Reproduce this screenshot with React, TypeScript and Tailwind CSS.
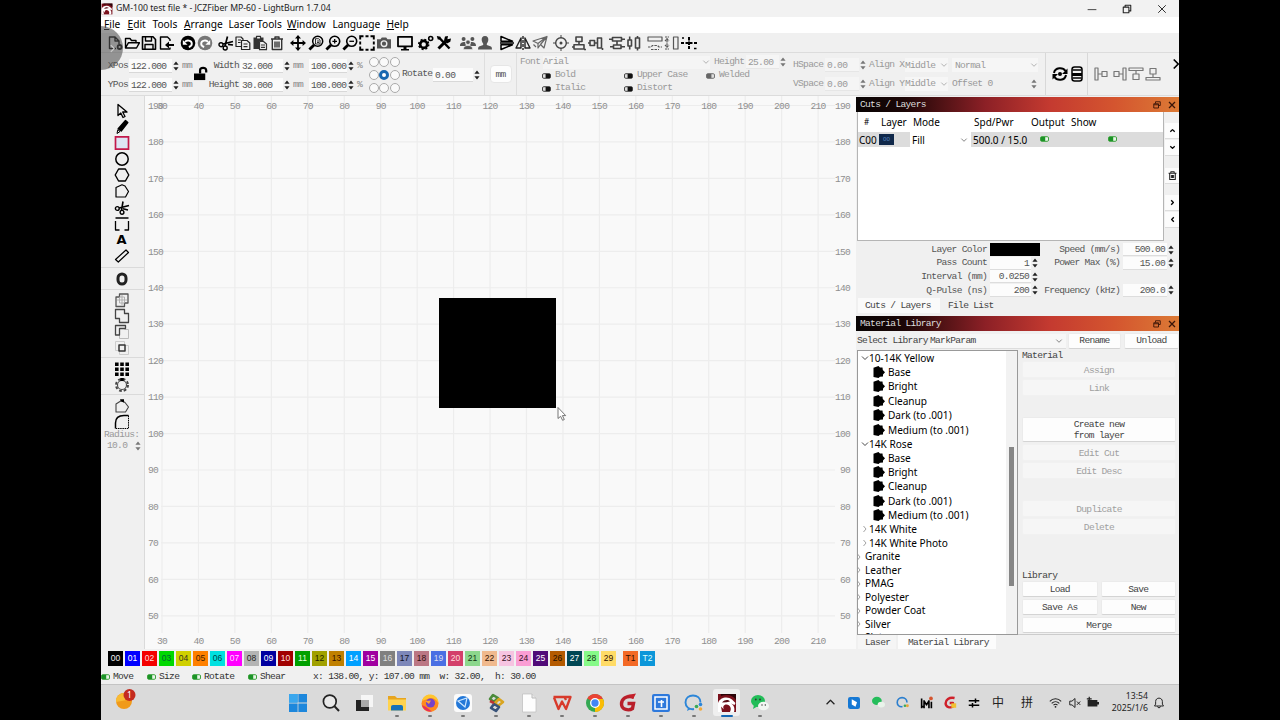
import React from "react";

type Kids = { children?: React.ReactNode };

const mono = "font-['Liberation_Mono',monospace] text-[9.6px] tracking-[-0.7px] whitespace-pre";
const ui = "font-['Noto_Sans','Noto_Sans_CJK_SC',sans-serif] whitespace-nowrap";

/* ---------- icon base ---------- */
function Ico({ children, c = "w-4 h-4 text-black", sw = 1.4 }: Kids & { c?: string; sw?: number }) {
  return (
    <svg viewBox="0 0 16 16" className={`shrink-0 ${c}`} fill="none" stroke="currentColor" strokeWidth={sw} strokeLinejoin="round">
      {children}
    </svg>
  );
}
const F = { fill: "currentColor", stroke: "none" } as const;

function Spin({ c = "text-[#222]" }: { c?: string }) {
  return (
    <svg viewBox="0 0 8 12" className={`w-2 h-3 shrink-0 ${c}`} fill="currentColor">
      <path d="M4 1.4 6.6 4.8H1.4ZM4 10.6 6.6 7.2H1.4Z" />
    </svg>
  );
}
function Down({ c = "text-[#777]" }: { c?: string }) {
  return (
    <svg viewBox="0 0 8 8" className={`w-2 h-2 shrink-0 ${c}`} fill="none" stroke="currentColor" strokeWidth="0.9">
      <path d="M1.3 2.6 4 5.3 6.7 2.6" />
    </svg>
  );
}
function Toggle({ on, dim }: { on?: boolean; dim?: boolean }) {
  return (
    <svg viewBox="0 0 9 6" className="w-[9px] h-[6px] shrink-0">
      <rect x="0.5" y="0.7" width="8" height="4.6" rx="1.2" fill={on ? "#e8f5e8" : "#ddd"} stroke={on ? "#2a9a2a" : dim ? "#666" : "#333"} strokeWidth="0.9" />
      <rect x={on || dim ? 1 : 3.6} y="0.9" width={on ? 4.2 : 4.4} height="4.2" fill={on ? "#1c9427" : dim ? "#666" : "#111"} />
    </svg>
  );
}

/* ---------- top toolbar ---------- */
const lens = (
  <>
    <circle cx="9.7" cy="6.3" r="5" />
    <path d="M6 10 1.4 14.6" strokeWidth="2.8" />
  </>
);
const groups: React.ReactNode[][] = [
  [
    <Ico><path d="M9 13.5H2.5V2H8l4 4v3M8 2v4h4" /><circle cx="12.6" cy="12" r="2" strokeWidth="1.8" /></Ico>,
    <Ico><path d="M1.5 13V3.5H6l1.5 2H12V8M1.5 13 4.5 7.7H15.5L12.5 13Z" /></Ico>,
    <Ico><path d="M1.5 1.8H12L14.5 4.5V14.2H1.5Z" strokeWidth="1.6" /><path d="M4.5 2V6H10.5V2M4 14V9.5H12V14" /></Ico>,
    <Ico><path d="M12 6V4.5L9.500 2H2.500V14H12V12.500" /><path d="M16 10H9" strokeWidth="2" /><path d="M11 6.500 7 10 11 13.500Z" {...F} /></Ico>,
  ],
  [
    <Ico><circle cx="8" cy="8" r="7.3" {...F} /><path d="M5 7C6.500 4.600 11.800 5 11.800 8.800c0 1.700-1.300 2.700-3 3.200" stroke="#fff" strokeWidth="1.900" /><path d="M2.800 5V9.800H7.600Z" fill="#fff" stroke="none" /></Ico>,
    <Ico c="w-4 h-4 text-[#777]"><circle cx="8" cy="8" r="7.3" {...F} /><path d="M11 7C9.500 4.600 4.200 5 4.200 8.800c0 1.700 1.300 2.700 3 3.200" stroke="#fff" strokeWidth="1.900" /><path d="M13.200 5V9.800H8.400Z" fill="#fff" stroke="none" /></Ico>,
  ],
  [
    <Ico><circle cx="3" cy="9.7" r="2" /><circle cx="7.2" cy="13" r="2" /><path d="M5 9 15 6.5M7 11 9.5 1.5M10 9.3l5 .7" strokeWidth="1.7" /></Ico>,
    <Ico c="w-4 h-4 text-[#222]" sw={1.2}><path d="M6 11.5H1V2H6L8 4V5M3 5H6M3 7.5H5.5M6.5 5.5H12L14.8 8V14.5H6.5ZM8.5 9H12.5M8.5 11.7H12.5" /></Ico>,
    <Ico c="w-4 h-4 text-[#333]" sw={1.2}><path d="M1.5 2.5H11.5V6H7V14H1.5Z" {...F} /><path d="M4.5 1.3H8.5V4H4.5Z" fill="#eee" /><path d="M7.5 6.5H11.5L14.5 9V14.7H7.5Z" fill="#eee" /><path d="M9 10H13M9 12.3H13" /></Ico>,
    <Ico c="w-4 h-4 text-[#333]"><path d="M2 4H14M6 3.5V2H10V3.5M3.3 4.5V14.5H12.7V4.5M6 6.5V12.5M8 6.5V12.5M10 6.5V12.5" /></Ico>,
  ],
  [
    <Ico sw={1.8}><path d="M8 2V14M2 8H14" /><path d="M8 0 11 3.4H5ZM8 16 5 12.6H11ZM0 8 3.4 5V11ZM16 8 12.6 11V5Z" {...F} /></Ico>,
    <Ico sw={1.5}>{lens}<path d="M7.500 3.700H10.500L12 5V9H7.500ZM9 6H11M9 7.500H11" strokeWidth=".8" /></Ico>,
    <Ico sw={1.6}>{lens}<path d="M9.7 4V8.6M7.4 6.3H12" strokeWidth="1.3" /></Ico>,
    <Ico sw={1.6}>{lens}<path d="M7.4 6.3H12" strokeWidth="1.3" /></Ico>,
    <Ico sw={1.9}><path d="M1.2 4.5V1.2H4.5M6.5 1.2H9.5M11.5 1.2H14.8V4.5M14.8 6.5V9.5M14.8 11.5V14.8H11.5M9.5 14.8H6.5M4.5 14.8H1.2V11.5M1.2 9.5V6.5" strokeLinejoin="miter" /></Ico>,
    <Ico c="w-4 h-4 text-[#555]"><path d="M1 4.3H4.5L5.8 2.6H10.2L11.5 4.3H15V13.6H1Z" {...F} /><circle cx="8" cy="8.7" r="2.8" stroke="#eee" /></Ico>,
  ],
  [<Ico sw={1.8}><path d="M1 1.8H15V11.3H1Z" /><path d="M6.5 11.5H9.5V14H12V15.5H4V14H6.5Z" {...F} /></Ico>],
  [
    <Ico><circle cx="5.7" cy="9.4" r="3.5" strokeWidth="2.6" /><circle cx="5.7" cy="9.4" r="5" strokeWidth="1.5" strokeDasharray="2 1.93" /><circle cx="12.7" cy="3.5" r="2" strokeWidth="1.6" /></Ico>,
    <Ico><path d="M3 2.5 13.5 13.5" strokeWidth="2.4" /><path d="M2.5 13.5 9.5 6.5" strokeWidth="3" /><path d="M9 1.5 12 1 11.4 4.2 15 3.6 14.3 6.8 11 8.4 8 5.5Z" {...F} /><path d="M.8 1 4.5 1.8 4.2 4.6 1.8 4.4Z" {...F} /></Ico>,
  ],
  [
    <Ico c="w-4 h-4 text-[#555]"><g {...F}><circle cx="3.6" cy="4" r="2" /><circle cx="12.4" cy="4" r="2" /><path d="M0 11C0 8 1.5 7 5 7L6 11ZM16 11C16 8 14.5 7 11 7L10 11Z" /><circle cx="8" cy="7.2" r="2.3" stroke="#eee" strokeWidth=".8" /><path d="M3.5 14.5C3.5 11.5 5 10.5 8 10.5S12.500 11.5 12.500 14.500Z" stroke="#eee" strokeWidth=".6" /></g></Ico>,
    <Ico c="w-4 h-4 text-[#555]"><path d="M8 1C10.500 1 11.500 2.800 11.300 5 11.100 7 10.300 8 9.800 8.700V10L14 11.600Q15 12.200 15 14.500H1Q1 12.200 2 11.600L6.200 10V8.700C5.700 8 4.900 7 4.700 5 4.500 2.800 5.500 1 8 1Z" {...F} /></Ico>,
  ],
  [
    <Ico sw={1.5}><path d="M2 8H16M3 1.500 14.500 6.300H3ZM3 14.500 14.500 9.700H3Z" /></Ico>,
    <Ico c="w-4 h-4 text-[#222]"><path d="M8 1V15" strokeDasharray="3 1" /><path d="M6 3V13H1ZM10 3V13H15Z" /></Ico>,
    <Ico c="w-4 h-4 text-[#666]" sw={1.2}><path d="M1 6 15 1.500 12 13 8.500 9.500 6 13V8.500ZM6 8.500 15 1.500 8.500 9.500M1.500 9.500 4 12" /></Ico>,
  ],
  [
    <Ico c="w-4 h-4 text-[#444]"><circle cx="8" cy="8" r="5.300" /><circle cx="8" cy="8" r="1.500" {...F} /><path d="M8 0V3M8 13V16M0 8H3M13 8H16" strokeWidth="1" /></Ico>,
    <Ico c="w-4 h-4 text-[#444]" sw={1.600}><path d="M5 2H11V6.500H5ZM3 9.800H13V14H3ZM8 6.500V9.800M1 12H3M13 14.500H15" /></Ico>,
    <Ico c="w-4 h-4 text-[#444]" sw={1.600}><path d="M2 5.500H6.500V10.500H2ZM9.500 3H13.500V13H9.500ZM6.500 8H9.500M0 8H2M14.500 13V15" /></Ico>,
  ],
  [
    <Ico c="w-4 h-4 text-[#444]" sw={1.600}><path d="M3.500 2.500H12.500V6H3.500ZM4.500 10H12V13.500H4.500ZM0 4.200H3.500M12.500 4.200H16M1 11.700H4.500M12 11.700H16M8 6V10" /></Ico>,
    <Ico c="w-4 h-4 text-[#444]" sw={1.600}><path d="M2 5H5.500V11H2ZM9.500 3H13.500V13H9.500ZM3.700 1.500V5M3.700 11V14.500M11.500 1V3M11.500 13V15.500" /></Ico>,
  ],
  [
    <Ico c="w-4 h-4 text-[#555]" sw={1.200}><path d="M1 2H15V6H1Z" /><path d="M1 12H4L5.500 10.500H10.500L12 12H15M4 14.500H12" strokeDasharray="2.500 1" /></Ico>,
    <Ico c="w-4 h-4 text-[#555]" sw={1.200}><path d="M1 2H5M1 14H5M3 3V13M1 6 3 4 5 6M1 10 3 12 5 10" strokeDasharray="2 .6" /><path d="M9.500 2H14V14H9.500Z" /></Ico>,
    <Ico sw={2}><path d="M8 2V14M0 8H3M4.500 8H11.500M13 8H16" strokeDasharray="3.500 1" /><path d="M13 13.500H15.500M1 3H3" strokeWidth="1.500" /></Ico>,
  ],
];

/* ---------- left tools ---------- */
const tools = [
  <Ico sw={1.3}><path d="M4 1.500 13 9H8.700L11 13.500 9 14.500 6.800 10 4 12.500Z" /></Ico>,
  <Ico><path d="M11.500 1.500 13.800 3.500 7.200 12 4.200 9.700Z" {...F} stroke="currentColor" /><path d="M3.800 10.700 6 12.500 3 14.500Z" strokeWidth="1" /></Ico>,
  <Ico c="w-4 h-4 text-[#c2184b]" sw={1.700}><path d="M1.500 1.800H14.500V14.200H1.500Z" fill="#dde4f4" strokeLinejoin="miter" /></Ico>,
  <Ico sw={1.500}><circle cx="8" cy="8" r="6.200" /></Ico>,
  <Ico><path d="M4.600 2H11.400L14.800 8 11.400 14H4.600L1.200 8Z" /></Ico>,
  <Ico sw={1.200}><path d="M2 4.500 8 1.800 11 3 14.500 8.500 11.500 14H2Z" /></Ico>,
  <Ico><circle cx="3.300" cy="8.500" r="1.900" /><circle cx="8" cy="12.300" r="1.900" /><path d="M5.200 8.100 15 5.500M7.500 10.500 9 1.500M9 8.800 14 10" strokeWidth="1.600" /></Ico>,
  <Ico sw={1.300}><path d="M1.500 2H14.500M1.500 5V14H5.500M14.500 5V14H10.500" /></Ico>,
  <span className="font-['DejaVu_Sans'] font-bold text-[13px] leading-4">A</span>,
  <Ico sw={1.200}><path d="M12 2 14.500 4.500 4.300 14 1.500 11.500Z" /></Ico>,
];
const boolTools = [
  <Ico c="w-4 h-4 text-[#555]" sw={1.300}><path d="M5.500 4V2H14V11H10.500V14.500H2V5H5.500Z" /><path d="M5.500 5V11H10.500M10.500 11V5H5.500M8 3V13M3 8H13" stroke="#aaa" strokeWidth=".9" /></Ico>,
  <Ico c="w-4 h-4 text-[#444]" sw={1.300}><path d="M1.500 1.500H10.500V5.500H14.500V14.500H5.500V10.500H1.500Z" /></Ico>,
  <Ico c="w-4 h-4 text-[#444]" sw={1.300}><path d="M10.500 5.500H14.500V14.500H5.500V10.500" stroke="#bbb" strokeWidth="1" /><path d="M1.500 1.500H11.500V4.500H5.500V11H1.500Z" /></Ico>,
  <Ico c="w-4 h-4 text-[#333]" sw={1.500}><path d="M1.500 1.500H10.500V5M5 10.500H1.500V1.500M11 5.500H14.500V14.500H5.500V11" stroke="#ccc" strokeWidth="1" /><path d="M5 5H11V11H5Z" /></Ico>,
];
const arrayTools = [
  <Ico><path d="M1 1.500h3.600v3.600H1ZM6.200 1.500h3.600v3.600H6.200ZM11.400 1.500H15v3.600h-3.600ZM1 6.500h3.600v3.600H1ZM6.200 6.500h3.600v3.600H6.200ZM11.400 6.500H15v3.600h-3.600ZM1 11.500h3.600v3.600H1ZM6.200 11.500h3.600v3.600H6.200ZM11.400 11.500H15v3.600h-3.600Z" {...F} /></Ico>,
  <Ico c="w-4 h-4 text-[#444]" sw={1.100}><circle cx="8" cy="8" r="4.500" /><circle cx="8" cy="8" r="6" strokeWidth="2" strokeDasharray="2.700 2.010" /><path d="M6.300 1H9.700V4H6.300Z" {...F} fill="#000" /></Ico>,
];
const nodeTools = [
  <Ico c="w-4 h-4 text-[#444]" sw={1.100}><path d="M2 6 7.500 2.500 11 4.500 14.500 9 11.500 14H2Z" /><path d="M6 1.300H10V4.500L7 3.500Z" {...F} fill="#000" /></Ico>,
  <Ico sw={1.500}><path d="M1.500 14.500V9C1.500 4 5 1.500 10 1.500H14.500" /><path d="M14.500 1.500V14.500H1.500" strokeWidth="1" strokeDasharray="1.500 .7" /></Ico>,
];

/* ---------- property bar ---------- */
function Field({ v, w, unit, dim }: { v: string; w: string; unit?: string; dim?: boolean }) {
  return (
    <span className={`flex items-center ${dim ? "text-[#999]" : "text-[#555]"}`}>
      <span className={`h-[14px] leading-[15px] border-b pl-[2px] ${dim ? "bg-[#f5f5f5] border-[#e6e6e6]" : "bg-[#fbfbfb] border-[#d8d8d8]"} ${w}`}>{v}</span>
      <Spin c={dim ? "text-[#777]" : "text-[#222]"} />
      {unit && <span className="pl-[2px] w-[14px] text-[#888]">{unit}</span>}
    </span>
  );
}

function PropBar() {
  const dots = [0, 1, 2, 3, 4, 5, 6, 7, 8];
  return (
    <div className={`h-[43px] flex bg-[#f0f0f0] border-b border-[#dcdcdc] text-[#555] ${mono}`}>
      <div className="w-[93px] pt-1 flex flex-col">
        {["XPos", "YPos"].map((l) => (
          <div key={l} className="h-[18.500px] flex items-center">
            <span className="w-[28px] text-right pr-px">{l}</span>
            <Field v="122.000" w="w-[43px]" unit="mm" />
          </div>
        ))}
      </div>
      <div className="w-[14px] pt-[13px]">
        <Ico c="w-[15px] h-[15px] text-black"><path d="M0 8H12V15H0Z" {...F} /><path d="M6.500 8V4.500C6.500 1 13 1 13 4.500V7" strokeWidth="2.400" /></Ico>
      </div>
      <div className="w-[161px] pt-1 flex flex-col">
        {[["Width", "32.000"], ["Height", "30.000"]].map(([l, v]) => (
          <div key={l} className="h-[18.500px] flex items-center">
            <span className="w-[32px] text-right pr-px">{l}</span>
            <Field v={v} w="w-[43px]" unit="mm" />
            <span className="w-[4px]" />
            <Field v="100.000" w="w-[38px]" unit="%" />
          </div>
        ))}
      </div>
      <div className="w-[31px] grid grid-cols-3 gap-y-[3px] content-start justify-items-center pt-1">
        {dots.map((d) => (
          <span key={d} className={d === 4 ? "w-[10px] h-[10px] rounded-full bg-white border-[3px] border-[#1767b0]" : "w-[10px] h-[10px] rounded-full bg-[#fafafa] border border-[#aaa]"} />
        ))}
      </div>
      <div className="w-[84px] flex items-center pt-px">
        <span className="w-[33px] pl-[2px]">Rotate</span>
        <Field v="0.00" w="w-[40px]" />
      </div>
      <div className="w-[33px] border-x border-[#dedede] flex items-center justify-center">
        <span className="w-[22px] h-[18px] bg-[#fdfdfd] border border-[#e6e6e6] rounded-sm leading-[17px] text-center text-[#555]">mm</span>
      </div>
      <div className="w-[275px] pt-[2px] flex flex-col text-[#999]">
        <div className="h-[14px] flex items-center">
          <span className="w-[26px] pl-[3px]">Font</span>
          <span className="w-[167px] h-[13px] leading-[14px] bg-[#f5f5f5] flex items-center justify-between"><span>Arial</span><Down c="text-[#aaa]" /></span>
          <span className="w-[36px] pl-[4px]">Height</span>
          <Field v="25.00" w="w-[33px]" dim />
        </div>
        <div className="grid grid-cols-[82px_82px_80px] pl-[25px]">
          {[["Bold", 0], ["Upper Case", 0], ["Welded", 1], ["Italic", 0], ["Distort", 0]].map(([l, d]) => (
            <span key={l} className="h-[13px] flex items-center gap-1"><Toggle dim={d === 1} />{l}</span>
          ))}
        </div>
      </div>
      <div className="w-[252px] pt-[3px] pl-px flex flex-col text-[#999]">
        {[["HSpace", "Align X", "Normal"], ["VSpace", "Align Y", "Offset 0"]].map(([a, b, c], i) => (
          <div key={a} className="h-[18.500px] flex items-center">
            <span className="w-[32px]">{a}</span>
            <Field v="0.00" w="w-[34px]" dim />
            <span className="w-[38px] pl-[2px]">{b}</span>
            <span className="w-[43px] h-[14px] leading-[15px] bg-[#f6f6f6] flex items-center justify-between">Middle<Down c="text-[#aaa]" /></span>
            <span className={i ? "w-[89px] h-[14px] leading-[15px] pl-[3px] ml-px flex items-center justify-between" : "w-[86px] h-[14px] leading-[15px] pl-[3px] ml-1 bg-[#f6f6f6] flex items-center justify-between"}>{c}{i ? <Spin c="text-[#777]" /> : <Down c="text-[#aaa]" />}</span>
          </div>
        ))}
      </div>
      <div className="w-[43px] border-x border-[#d8d8d8] flex items-center gap-[1px] pl-[6px] ml-px">
        <Ico sw={2}><path d="M2 7C3 1 11 1 13.500 5M14 9C13 15 5 15 2.500 11" /><path d="M15.500 2.500V8H10ZM.5 13.500V8H6Z" {...F} /><circle cx="8" cy="8" r="2" {...F} /></Ico>
        <Ico sw={1.500}><rect x="3" y="1" width="10" height="14" rx="2.500" /><path d="M3.500 4H12.500M3.500 12H12.500" /><path d="M3 7H13V10H3Z" {...F} /></Ico>
      </div>
      <div className="flex items-center gap-[1px] pl-[6px] text-[#777]">
        {["M1 2H4V14H1ZM4 8H8M8 5.500H13V10.500H8Z", "M12 2H15V14H12ZM12 8H8M3 5.500H8V10.500H3Z", "M1 2H15V4.500H1ZM8 4.500V8M5 8H11V13.500H5Z", "M1 11.500H15V14H1ZM8 11.500V8M5 2.500H11V8H5Z"].map((d) => (
          <Ico key={d} c="w-4 h-4" sw={1.200}><path d={d} /></Ico>
        ))}
      </div>
      <div className="ml-auto w-[6px] pt-[5px] overflow-hidden">
        <Ico c="w-[12px] h-[12px] text-black -ml-[3px]" sw={2.300}><path d="M5 2 11 8 5 14" /></Ico>
      </div>
    </div>
  );
}

/* ---------- workspace ---------- */
function Workspace() {
  const xs = Array.from({ length: 19 }, (_, i) => ({ v: 30 + i * 10, p: 17 + i * 36.45 }));
  const ys = Array.from({ length: 15 }, (_, i) => ({ v: 190 - i * 10, p: 9.500 + i * 36.45 }));
  return (
    <svg width="711" height="553" viewBox="0 0 711 553" className="bg-[#f9f9f9] shrink-0">
      <g stroke="#ededed" strokeWidth="1.200">
        {xs.map((x) => <line key={x.v} x1={x.p} x2={x.p} y1="0" y2="537" />)}
        {ys.map((y) => <line key={y.v} x1="16" x2="690" y1={y.p} y2={y.p} />)}
      </g>
      <g className={mono} fill="#8f8f8f" textAnchor="middle">
        {xs.map((x) => (
          <React.Fragment key={x.v}>
            <text x={x.p} y="12.500">{x.v}</text>
            <text x={x.p} y="547.500">{x.v}</text>
          </React.Fragment>
        ))}
        {ys.map((y) => (
          <React.Fragment key={y.v}>
            <text x={y.v < 100 ? 8 : 10.500} y={y.p + 3.200}>{y.v}</text>
            <text x={y.v < 100 ? 700 : 697.500} y={y.p + 3.200}>{y.v}</text>
          </React.Fragment>
        ))}
      </g>
      <rect x="294" y="202" width="117" height="110" fill="#000" />
      <path d="M413 311.500V322.500L415.600 320.300 417.600 324.300 419.300 323.500 417.400 319.600H420.700Z" fill="#fff" stroke="#666" strokeWidth=".9" />
    </svg>
  );
}

/* ---------- right docks ---------- */
function DockHead({ children }: Kids) {
  return (
    <div className={`h-[15px] shrink-0 flex items-center pl-[4px] pr-[3px] text-[#ddd] bg-[linear-gradient(90deg,#080404_0%,#1c0606_15%,#8c2026_40%,#c43a30_60%,#d4552f_80%,#dc7a35_100%)] ${mono}`}>
      <span className="pt-[2px]">{children}</span>
      <span className="ml-auto flex gap-[7px] text-[#3a1508]">
        <Ico c="w-2 h-2" sw={1.800}><path d="M5 5V1.500H14.500V9H11M1.500 5.500H11V14H1.500ZM2 7.500H11" /></Ico>
        <Ico c="w-2 h-2" sw={2.600}><path d="M2 2 14 14M14 2 2 14" /></Ico>
      </span>
    </div>
  );
}
const sideBtn = "w-[14px] h-[16px] bg-[#fcfcfc] border-b border-[#ddd] flex items-center justify-center";

function Cuts() {
  const chev = (d: string) => <span className={sideBtn}><Ico c="w-[7px] h-[7px] text-black" sw={3}><path d={d} /></Ico></span>;
  const rows: [string, string, string, string][] = [
    ["Layer Color", "", "Speed (mm/s)", "500.00"],
    ["Pass Count", "1", "Power Max (%)", "15.00"],
    ["Interval (mm)", "0.0250", "", ""],
    ["Q-Pulse (ns)", "200", "Frequency (kHz)", "200.0"],
  ];
  const val = "h-[13px] leading-[14px] bg-[#fcfcfc] border-b border-[#ddd] text-right pr-[2px]";
  return (
    <>
      <div className="h-[129px] flex">
        <div className={`w-[307px] ml-px bg-white border border-t-0 border-[#b5b5b5] text-[10px] text-black ${ui}`}>
          <div className="h-[20px] grid grid-cols-[21px_32px_61px_57px_40px_50px] items-center pl-[2px] leading-none">
            <span className="pl-1 text-[8px]">#</span><span>Layer</span><span>Mode</span><span>Spd/Pwr</span><span>Output</span><span>Show</span>
          </div>
          <div className="h-[15px] bg-[#dcdcdc] grid grid-cols-[20px_31px_61px_69px_68px_20px] items-center pl-[1px] leading-none">
            <span>C00</span>
            <span className="w-[15px] h-[11px] bg-[#10284a] text-[#5f8fc5] text-[6px] leading-[11px] text-center">00</span>
            <span className="h-[15px] bg-white flex items-center justify-between pl-[2px] pr-[3px]">Fill<Down /></span>
            <span className="pl-[2px]">500.0 / 15.0</span>
            <span className="flex pb-px"><Toggle on /></span><span className="flex pb-px"><Toggle on /></span>
          </div>
        </div>
        <div className="pl-px pt-[11px] flex flex-col">
          {chev("M3 11 8 6 13 11")}
          <span className="h-px" />
          {chev("M3 5 8 10 13 5")}
          <span className="h-[12px]" />
          <span className={sideBtn}><Ico c="w-[9px] h-[9px] text-[#222]" sw={1.800}><path d="M1 4H15M5 3V1.500H11V3M3 4V15H13V4M6 7V12.500M8 7V12.500M10 7V12.500" /></Ico></span>
          <span className="h-[11px]" />
          {chev("M5 3 10 8 5 13")}
          <span className="h-px" />
          {chev("M11 3 6 8 11 13")}
        </div>
      </div>
      <div className={`pt-[2px] text-[#555] ${mono}`}>
        {rows.map(([a, b, c, d], i) => (
          <div key={a} className="h-[13.600px] flex items-center">
            <span className="w-[131px] text-right pt-px">{a}</span>
            <span className="w-[53px] pl-[3px] flex items-center">
              {i === 0 ? <span className="w-[51px] h-[13px] bg-black" /> : <><span className={`w-[41px] ${val}`}>{b}</span><Spin /></>}
            </span>
            <span className="w-[80px] text-right pt-px">{c}</span>
            {d && <span className="pl-[3px] flex items-center"><span className={`w-[44px] ${val}`}>{d}</span><Spin /></span>}
          </div>
        ))}
      </div>
      <div className={`h-[17px] mt-[1px] flex items-start text-[#444] leading-[16px] ${mono}`}>
        <span className="w-[82px] h-[15px] ml-[2px] pl-[7px] bg-[#fafafa]">Cuts / Layers</span>
        <span className="pl-[8px]">File List</span>
      </div>
    </>
  );
}

const tree: [number, string][] = [
  [1, "10-14K Yellow"], [2, "Base"], [2, "Bright"], [2, "Cleanup"], [2, "Dark (to .001)"], [2, "Medium (to .001)"],
  [1, "14K Rose"], [2, "Base"], [2, "Bright"], [2, "Cleanup"], [2, "Dark (to .001)"], [2, "Medium (to .001)"],
  [3, "14K White"], [3, "14K White Photo"],
  [4, "Granite"], [4, "Leather"], [4, "PMAG"], [4, "Polyester"], [4, "Powder Coat"], [4, "Silver"], [4, "Slate"],
];
function Btn({ children, c = "h-[16px] w-full", dim }: Kids & { c?: string; dim?: boolean }) {
  return (
    <span className={`flex items-center justify-center text-center rounded-[2px] border pt-px ${dim ? "bg-[#f6f6f6] border-[#f1f1f1] text-[#a0a0a0]" : "bg-[#fdfdfd] border-[#ebebeb] border-b-[#d4d4d4] text-[#444]"} ${c}`}>{children}</span>
  );
}

function Library() {
  return (
    <>
      <div className={`h-[19px] flex items-center pt-px text-[#444] ${mono}`}>
        <span className="w-[74px] pl-px pt-px">Select Library</span>
        <span className="w-[136px] h-[15px] leading-[16px] bg-[#f7f7f7] border-b border-[#ddd] flex items-center justify-between pr-[3px]">MarkParam<Down /></span>
        <Btn c="w-[53px] h-[16px] ml-[2px]">Rename</Btn>
        <Btn c="w-[55px] h-[16px] ml-[3px]">Unload</Btn>
      </div>
      <div className="h-[285px] flex">
        <div className={`w-[161px] ml-px border border-[#999] bg-white flex overflow-hidden text-black text-[10.100px] ${ui}`}>
          <div className="flex-1 overflow-hidden">
            {tree.map(([k, t], i) => (
              <div key={i} className={k === 2 ? "h-[14.450px] pl-[15px] flex items-center gap-[3px] leading-none" : k === 4 ? "h-[13.500px] -ml-[3px] flex items-center leading-none" : "h-[13.600px] pl-[3px] flex items-center leading-none"}>
                {k === 2 && <svg viewBox="0 0 12 12" className="w-3 h-3 shrink-0"><path d="M.5 1.800 5.500 0 7 1.500 9.500 1.500 9.800 4 12 6.200 10 8.500 10 10.500 7 10.800 5.500 12 .5 11Z" /></svg>}
                {k === 1 && <Ico c="w-2 h-2 text-[#333]" sw={1.800}><path d="M2 5 8 11 14 5" /></Ico>}
                {k >= 3 && <Ico c={k === 4 ? "w-[8px] h-[8px] text-[#999] mr-[2px]" : "w-[8px] h-[8px] text-[#999]"} sw={1.800}><path d="M5 2 10 8 5 14" /></Ico>}
                {t}
              </div>
            ))}
          </div>
          <div className="w-[11px] bg-[#f2f2f2] flex justify-center pt-[96px]"><span className="w-[5px] h-[139px] bg-[#868686]" /></div>
        </div>
        <div className={`flex-1 pl-[4px] pr-[3px] flex flex-col text-[#444] border-b border-[#ccc] leading-[11px] ${mono}`}>
          <span className="h-[11px]">Material</span>
          <Btn dim c="h-[17px] w-full">Assign</Btn>
          <Btn dim c="h-[17px] w-full mt-px">Link</Btn>
          <Btn c="h-[25px] w-full mt-[21px]">{"Create new\nfrom layer"}</Btn>
          <Btn dim c="h-[17px] w-full mt-[2px]">Edit Cut</Btn>
          <Btn dim c="h-[17px] w-full mt-px">Edit Desc</Btn>
          <Btn dim c="h-[17px] w-full mt-[21px]">Duplicate</Btn>
          <Btn dim c="h-[17px] w-full mt-px">Delete</Btn>
          <span className="mt-[35px] h-[11px]">Library</span>
          <div className="grid grid-cols-2 gap-x-[3px] gap-y-[2px]">
            <Btn>Load</Btn><Btn>Save</Btn><Btn>Save As</Btn><Btn>New</Btn>
          </div>
          <Btn c="h-[16px] w-full mt-[2px]">Merge</Btn>
        </div>
      </div>
      <div className={`h-[14px] flex text-[#444] leading-[15px] ${mono}`}>
        <span className="w-[38px] ml-[2px] pl-[7px] bg-[#f5f5f5]">Laser</span>
        <span className="ml-[2px] w-[98px] pl-[10px] bg-[#fcfcfc]">Material Library</span>
      </div>
    </>
  );
}

/* ---------- palette ---------- */
const palette: [string, string][] = [
  ["00", "bg-black text-[#eee]"], ["01", "bg-[#0000ff] text-white"], ["02", "bg-[#f40000] text-[#fdd]"], ["03", "bg-[#00d800] text-[#063]"],
  ["04", "bg-[#d0d000] text-[#332]"], ["05", "bg-[#ff8000] text-[#420]"], ["06", "bg-[#00e0e0] text-[#044]"], ["07", "bg-[#ff00ff] text-[#fdf]"],
  ["08", "bg-[#b4b4b4] text-[#222]"], ["09", "bg-[#0000a0] text-white"], ["10", "bg-[#a00000] text-[#fdd]"], ["11", "bg-[#00a000] text-[#dfd]"],
  ["12", "bg-[#a0a000] text-[#220]"], ["13", "bg-[#c08000] text-[#310]"], ["14", "bg-[#00a0ff] text-white"], ["15", "bg-[#a000a0] text-white"],
  ["16", "bg-[#808080] text-[#ddd]"], ["17", "bg-[#7d87b9] text-[#112]"], ["18", "bg-[#bb7784] text-[#311]"], ["19", "bg-[#4a6fe3] text-[#dde]"],
  ["20", "bg-[#d33f6a] text-[#fdd]"], ["21", "bg-[#8cd78c] text-[#131]"], ["22", "bg-[#f0b98d] text-[#310]"], ["23", "bg-[#f6c4e1] text-[#312]"],
  ["24", "bg-[#fa9ed4] text-[#312]"], ["25", "bg-[#500a78] text-white"], ["26", "bg-[#b45a00] text-[#210]"], ["27", "bg-[#004754] text-white"],
  ["28", "bg-[#86fa88] text-[#131]"], ["29", "bg-[#ffdb66] text-[#310]"], ["T1", "bg-[#f36926] text-[#310] ml-[5px]"], ["T2", "bg-[#0c96d9] text-[#dff]"],
];

/* ---------- taskbar ---------- */
function App32({ children }: Kids) {
  return <svg viewBox="0 0 20 20" className="w-5 h-5" fill="none">{children}</svg>;
}
const dragon = (
  <>
    <rect x="1" y="1" width="18" height="18" fill="#7a111c" />
    <path d="M4 3C10 1 16 2 19 7V1H4Z" fill="#2a0508" />
    <path d="M1 10C3 4 11 3 15 6.500L18.500 10 17.500 12 14 10.500C17 12 18 15.500 17 19H13C15 15 13 12 9.500 11.500 6.500 11.500 5.500 14 7 16.500L4 13.500 5 19H1Z" fill="#fff" />
    <path d="M5 9.500C8 6.500 11 6.500 13 8.500L9.500 9.300Z" fill="#5a0c14" />
  </>
);
const apps = [
  <App32><g fill="#1d87dc"><path d="M1 1H9.600V9.600H1ZM10.400 1H19V9.600H10.400ZM1 10.400H9.600V19H1ZM10.400 10.400H19V19H10.400Z" /></g><path d="M1 1H9.600V9.600H1Z" fill="#3aa7ee" /></App32>,
  <App32><circle cx="8.800" cy="8.500" r="6.400" stroke="#222" strokeWidth="1.700" fill="#e8e8e8" /><path d="M13.500 13.300 18 18" stroke="#222" strokeWidth="2" /></App32>,
  <App32><path d="M7 2H19V14H7Z" fill="#f6f6f6" /><path d="M2 7H7V14H15V18H2Z" fill="#222" /><path d="M7 7H15V14H7Z" fill="#aaa" /></App32>,
  <App32><path d="M1 3H8L10 5H19V17H1Z" fill="#e7a520" /><path d="M1 6.500H19V17.500H1Z" fill="#ffd34e" /><path d="M4 17.500V13.500Q4 12 6 12H14Q16 12 16 13.500V17.500Z" fill="#1872b8" /></App32>,
  <App32><circle cx="10" cy="10.500" r="8.500" fill="#ff8a1e" /><path d="M2 8C3 3 8 1 10 1.500 14 1 19 5 18.500 11 17 6 13 5 10 5Z" fill="#ffc52e" /><path d="M2 12C3 17 8 19 12 18.500L6 14Z" fill="#e8305a" /><circle cx="10.500" cy="10" r="4.600" fill="#7642c9" /><path d="M5 8 11 7.500 9 11Z" fill="#ffa436" /></App32>,
  <App32><rect x="1" y="1" width="18" height="18" rx="3" fill="#fbfbfb" /><circle cx="10" cy="10" r="7" fill="#2378d8" /><path d="M5 8 14 5 12 14ZM5 8 12 14" stroke="#cde6ff" strokeWidth="1.200" /></App32>,
  <App32><g strokeWidth="2.600" strokeLinejoin="round"><path d="M7 2 12 5 8 9 4 6Z" stroke="#4b8b3b" /><path d="M13 6 17 9 12 13 9 10Z" stroke="#d9a520" /><path d="M8 11 13 14 10 18 5 15Z" stroke="#38537a" /><path d="M4 8 8 10" stroke="#b33" /></g></App32>,
  <App32><path d="M3.500 1H13L17 5V19H3.500Z" fill="#fdfdfd" stroke="#bbb" strokeWidth=".7" /><path d="M13 1V5H17" stroke="#bbb" fill="#e8e8e8" /></App32>,
  <App32><path d="M1.500 4H12.500L14 7M9.500 4H18.500L14 16 10 8.500 6.500 16 2 4.500" stroke="#d83a2b" strokeWidth="2.300" strokeLinejoin="round" /></App32>,
  <App32><circle cx="10" cy="10" r="9" fill="#34a853" /><path d="M10 10 2.200 5.500A9 9 0 0 1 17.800 5.500Z" fill="#ea4335" /><path d="M10 10H19A9 9 0 0 1 10 19L14 11ZM10 6H18.100A9 9 0 0 1 10 19Z" fill="#fbbc05" /><circle cx="10" cy="10" r="4.300" fill="#4285f4" stroke="#fff" strokeWidth="1.300" /></App32>,
  <App32><path d="M16 4C8 2 3.500 6 3.500 11 3.500 17 11 18 14.500 15.500L15.500 10.500H9.500" stroke="#b91f2a" strokeWidth="3.400" /><path d="M9 2 18 0.500 15 6Z" fill="#c4212b" /></App32>,
  <App32><rect x="1" y="1" width="18" height="18" rx="2" fill="#2e79dc" /><rect x="4" y="4" width="12" height="12" stroke="#fff" strokeWidth="1.500" /><path d="M7 9H13M10.500 7V14" stroke="#fff" strokeWidth="1.600" /></App32>,
  <App32><path d="M10 16C5 17 1.500 13.500 1.500 9.500 1.500 5 5 2.500 9 2.500S16.500 5 16.500 9.500" stroke="#2c86d8" strokeWidth="1.900" /><path d="M4 15 3 18 7 16" fill="#2c86d8" /><circle cx="12.500" cy="13.500" r="1.800" fill="#3aab58" /><circle cx="16.500" cy="11.500" r="1.800" fill="#2c86d8" /><circle cx="16.500" cy="16" r="1.800" fill="#f2a93b" /></App32>,
  <App32>{dragon}</App32>,
  <App32><ellipse cx="8" cy="8" rx="7" ry="6" fill="#22bd58" /><path d="M4 12 3 16 8 13" fill="#22bd58" /><ellipse cx="13.500" cy="13" rx="5.500" ry="4.300" fill="#f2f6f2" /><g fill="#333"><circle cx="5.800" cy="6.500" r=".9" /><circle cx="10" cy="6.500" r=".9" /><circle cx="12" cy="12" r=".7" /><circle cx="15.300" cy="12" r=".7" /></g></App32>,
];

function Taskbar() {
  return (
    <div className={`h-[36px] bg-[#dadada] border-t border-[#c4c4c4] flex ${ui}`}>
      <div className="w-[180px] pl-[13px] pt-[3px]">
        <svg viewBox="0 0 24 24" className="w-6 h-6">
          <circle cx="10" cy="13" r="8" fill="#f09a1a" /><path d="M2 14A8 8 0 0 1 10 5L13 12Z" fill="#f8bb35" />
          <circle cx="15.500" cy="7" r="6" fill="#c42b1f" />
          <text x="15.500" y="10" fontSize="8.500" fill="#fff" textAnchor="middle">1</text>
        </svg>
      </div>
      <div className="flex">
        {apps.map((a, i) => (
          <div key={i} className="w-[33px] flex flex-col items-center pt-[4px]">
            <div className={i === 13 ? "w-[27px] h-[27px] rounded-[3px] bg-[#efefef] flex items-center justify-center" : "w-[27px] h-[27px] flex items-center justify-center"}>{a}</div>
            {i > 2 && <span className={i === 13 ? "w-[12px] h-[2px] -mt-px bg-[#1467b4] rounded" : "w-[4px] h-[2px] -mt-px bg-[#777] rounded"} />}
          </div>
        ))}
      </div>
      <div className="ml-auto flex items-center text-[#222]">
        <span className="w-6 flex justify-center"><Ico c="w-[9px] h-[9px]" sw={2.200}><path d="M1 11 8 4 15 11" /></Ico></span>
        <span className="w-6 flex justify-center"><Ico c="w-[12px] h-[12px]"><rect width="16" height="16" rx="3" fill="#1578d4" stroke="none" /><path d="M5 3 12 7 10 13 5 10Z" fill="#fff" stroke="none" /></Ico></span>
        <span className="w-6 flex justify-center"><Ico c="w-[13px] h-[13px]"><ellipse cx="6" cy="6" rx="6" ry="5" fill="#25bd5b" stroke="none" /><ellipse cx="11.500" cy="10.500" rx="4.500" ry="3.500" fill="#e9f3ea" stroke="none" /></Ico></span>
        <span className="w-6 flex justify-center"><Ico c="w-[13px] h-[13px]" sw={2}><path d="M8 13C4 14 1.500 11 1.500 8 1.500 4.500 4 2 7.500 2S13.500 4.500 13.500 8" stroke="#2c7fce" /><circle cx="11" cy="12" r="1.600" fill="#3aab58" stroke="none" /><circle cx="14" cy="12" r="1.800" fill="#e8a33a" stroke="none" /></Ico></span>
        <span className="w-6 flex justify-center"><Ico c="w-[13px] h-[13px] text-black" sw={2}><path d="M2 3V15M5 15V6L8 11 11 6V15M14 7V15M2 13H5" /><circle cx="13.500" cy="3" r="2.300" fill="#d4552f" stroke="none" /></Ico></span>
        <span className="w-6 flex justify-center"><Ico c="w-[13px] h-[13px]" sw={3}><path d="M13 2.500C6 1 2 5 2 9 2 14 8 15 11 13V8.500H7" stroke="#cf202a" /><path d="M9 9H15V14.500H9Z" fill="#f1c232" stroke="none" /></Ico></span>
        <span className="w-6 flex justify-center"><Ico c="w-[12px] h-[12px] text-black" sw={2}><path d="M1 5H15M1 11H15M10 2V8M6 8V14" /></Ico></span>
        <span className="w-6 text-center text-[12px]">中</span>
        <span className="w-[34px] text-center text-[12px]">拼</span>
        <span className="w-[22px] flex justify-center"><Ico c="w-[13px] h-[13px]" sw={1.300}><path d="M1 6.500C5 2.500 11 2.500 15 6.500M3.300 9C6 6.300 10 6.300 12.700 9M5.500 11.300C7 10 9 10 10.500 11.300" /><circle cx="8" cy="13.300" r="1.100" {...F} /></Ico></span>
        <span className="w-[17px] flex justify-center"><Ico c="w-[12px] h-[12px]" sw={1.300}><path d="M1 5.500H4L8 2V14L4 10.500H1ZM10.500 6 15 10.500M15 6 10.500 10.500" /></Ico></span>
        <span className="w-[19px] flex justify-center"><Ico c="w-[13px] h-[13px]"><path d="M2 5H14V13H2ZM14 7.500H16V10.500H14Z" {...F} /><path d="M4 1V7M1 3.500H7" strokeWidth="1.500" /></Ico></span>
        <span className="w-[46px] text-right text-[8.700px] leading-[12px] text-[#222] -mt-[2px]">13:54<br />2025/1/6</span>
        <span className="w-[31px] pl-[5px]"><Ico c="w-[12px] h-[12px]" sw={1.300}><path d="M2 12H14L12.500 9.500V6C12.500 0 3.500 0 3.500 6V9.500ZM6 12.500C6 15 10 15 10 12.500" /></Ico></span>
      </div>
    </div>
  );
}

const line = "h-[2px] w-full border-b border-[#dadada] mb-[3px]";

export default function App() {
  const menus: [string, string, string][] = [
    ["F", "ile", "w-[23.500px]"], ["E", "dit", "w-[25px]"], ["", "Tools", "w-[31.500px]"], ["A", "rrange", "w-[44.500px]"], ["", "Laser Tools", "w-[58.500px]"],
    ["W", "indow", "w-[45.500px]"], ["", "Language", "w-[54px]"], ["H", "elp", "w-[24px]"],
  ];
  return (
    <div className="w-[1280px] h-[720px] bg-black pl-[101px] pr-[101px] overflow-hidden">
      <div className="relative w-[1078px] h-[720px] overflow-hidden bg-[#f0f0f0] flex flex-col">
        <div className={`h-[17px] shrink-0 bg-[#f2f2f2] flex items-center text-[#222] text-[8.700px] ${ui}`}>
          <svg viewBox="0 0 20 20" className="w-[12px] h-[12px] mr-[3px]">{dragon}</svg>
          GM-100 test file * - JCZFiber MP-60 - LightBurn 1.7.04
          <span className="ml-auto flex items-center text-[#222] pr-[12px] gap-[25px]">
            <Ico c="w-[10px] h-[10px]" sw={1.300}><path d="M1 9H15" /></Ico>
            <Ico c="w-[10px] h-[10px]" sw={1.700}><path d="M2 5H11V14H2ZM5 5V2H14V11H11" /></Ico>
            <Ico c="w-[10px] h-[10px]" sw={1.500}><path d="M2 2 14 14M14 2 2 14" /></Ico>
          </span>
        </div>
        <div className={`h-[16px] shrink-0 bg-white flex items-center pl-[3px] text-black text-[10.200px] ${ui}`}>
          {menus.map(([u, r, w]) => <span key={r} className={w}><u className="underline-offset-1">{u}</u>{r}</span>)}
        </div>
        <div className="h-[20px] shrink-0 border-b border-[#dcdcdc] flex items-center pl-[5.500px] gap-[4px]">
          {groups.map((g, i) => (
            <div key={i} className={i === 6 ? "flex ml-[3px]" : "flex"}>
              {g.map((ic, j) => <span key={j} className="w-[17.150px] flex justify-center">{ic}</span>)}
            </div>
          ))}
        </div>
        <PropBar />
        <div className="h-[553px] shrink-0 flex">
          <div className="w-[44px] shrink-0 border-r border-[#dadada] flex flex-col items-center pt-[7px]">
            {tools.map((t, i) => <span key={i} className="h-[16.100px] w-4 -ml-[2px] flex justify-center">{t}</span>)}
            <div className="h-[4px] w-full border-b border-[#dadada] mb-[3px]" />
            <Ico c="w-4 h-4 -ml-[2px] text-[#222]" sw={3}><rect x="4" y="3" width="8" height="10" rx="4" /></Ico>
            <div className="h-[3px] w-full border-b border-[#dadada] mb-[2px]" />
            {boolTools.map((t, i) => <span key={i} className="h-4 -ml-[2px]">{t}</span>)}
            <div className={line} />
            {arrayTools.map((t, i) => <span key={i} className="h-4 -ml-[2px]">{t}</span>)}
            <div className={line} />
            {nodeTools.map((t, i) => <span key={i} className="h-4 -ml-[2px]">{t}</span>)}
            <div className={`text-[#999] leading-[10px] w-full pl-[3px] ${mono}`}>Radius:</div>
            <div className={`text-[#999] leading-[12px] w-full pl-[6px] flex items-center justify-between pr-[2px] ${mono}`}>10.0<Spin c="text-[#777]" /></div>
          </div>
          <Workspace />
          <div className="w-[323px] shrink-0 flex flex-col pt-px">
            <DockHead>Cuts / Layers</DockHead>
            <Cuts />
            <div className="h-px" />
            <DockHead>Material Library</DockHead>
            <Library />
          </div>
        </div>
        <div className="h-[19px] shrink-0 flex items-center gap-[2px] pl-[7px]">
          {palette.map(([n, c]) => (
            <span key={n} className={`w-[15px] h-[15px] leading-[15px] text-center text-[8.500px] font-['Liberation_Sans',sans-serif] ${c}`}>{n}</span>
          ))}
        </div>
        <div className={`h-[16px] shrink-0 flex items-center pt-[2px] text-[#333] ${mono}`}>
          {[["Move", "w-[46px]"], ["Size", "w-[45px]"], ["Rotate", "w-[56px]"], ["Shear", "w-[65px]"]].map(([l, w]) => (
            <span key={l} className={`flex items-center gap-[3px] ${w}`}><Toggle on />{l}</span>
          ))}
          <span>{"x: 138.00, y: 107.00 mm  w: 32.00,  h: 30.00"}</span>
        </div>
        <Taskbar />
        <div className="absolute -left-[22px] top-[26px] w-[44px] h-[44px] rounded-full bg-[#555]/60 flex items-center justify-end pr-[6px]">
          <Ico c="w-[9px] h-[9px] text-[#ccc]" sw={2}><path d="M5 2 11 8 5 14" /></Ico>
        </div>
      </div>
    </div>
  );
}
